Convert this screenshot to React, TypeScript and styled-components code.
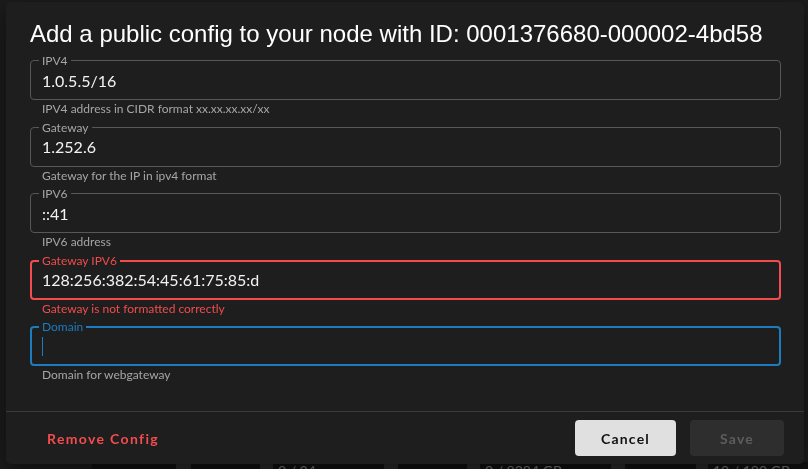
import React from 'react';
import styled, { createGlobalStyle } from 'styled-components';

const GlobalStyle = createGlobalStyle`
  html, body {
    margin: 0;
    padding: 0;
    background: #1c1c1c;
    overflow: hidden;
  }
  * {
    box-sizing: border-box;
  }
`;

type FieldState = 'normal' | 'error' | 'focused';

const COLORS = {
  dialog: '#1e1e1e',
  border: '#575757',
  label: '#a6a6a6',
  text: '#f2f2f2',
  red: '#f24c4e',
  blue: '#1c7cbf',
};

const stateColor = (s: FieldState) =>
  s === 'error' ? COLORS.red : s === 'focused' ? COLORS.blue : COLORS.border;

const stateText = (s: FieldState) =>
  s === 'error' ? COLORS.red : s === 'focused' ? COLORS.blue : COLORS.label;

const borderWidth = (s: FieldState) => (s === 'normal' ? 1 : 2);

// page behind the modal, only a sliver of the table shows at the bottom
const Page = styled.div`
  width: 808px;
  height: 469px;
  display: flex;
  align-items: flex-end;
  overflow: hidden;
`;

const TableRow = styled.div`
  display: flex;
  width: 100%;
  height: 24px;
  margin-bottom: -17px;
  padding-left: 92px;
`;

const Cell = styled.div<{ $w: number; $shade?: boolean }>`
  width: ${(p) => p.$w}px;
  flex: none;
  background: ${(p) => (p.$shade ? '#2b2b2b' : '#121212')};
  color: #7a7a7a;
  font-family: Lato, 'Noto Sans', sans-serif;
  font-size: 14px;
  line-height: 18px;
  padding-left: 5px;
  white-space: nowrap;
`;

const Backdrop = styled.div`
  position: fixed;
  inset: 0;
`;

const Dialog = styled.div`
  position: absolute;
  top: 2px;
  left: 6px;
  width: 798px;
  height: 462px;
  background: ${COLORS.dialog};
  border-radius: 5px;
  display: flex;
  flex-direction: column;
  box-shadow: 0 8px 24px rgba(0, 0, 0, 0.5);
`;

const Content = styled.div`
  flex: 1;
  padding: 16px 23px 0 24px;
`;

const Title = styled.h2`
  margin: 0 0 10px;
  font-family: 'Liberation Sans', Arial, sans-serif;
  font-weight: 400;
  font-size: 24px;
  line-height: 32px;
  color: #ffffff;
  white-space: nowrap;
`;

const Form = styled.div`
  display: flex;
  flex-direction: column;
  gap: 9.5px;
`;

const FieldWrap = styled.div`
  display: flex;
  flex-direction: column;
`;

const Outline = styled.div<{ $state: FieldState }>`
  position: relative;
  height: 40px;
  border: ${(p) => borderWidth(p.$state)}px solid ${(p) => stateColor(p.$state)};
  border-radius: 4px;
  display: flex;
  align-items: center;
  padding-left: ${(p) => 12 - borderWidth(p.$state)}px;
`;

const Label = styled.span<{ $state: FieldState }>`
  position: absolute;
  top: ${(p) => -6 - borderWidth(p.$state)}px;
  left: ${(p) => 9 - borderWidth(p.$state)}px;
  padding: 0 3px;
  background: ${COLORS.dialog};
  color: ${(p) => stateText(p.$state)};
  font-family: Lato, 'Noto Sans', sans-serif;
  font-size: 12px;
  line-height: 14px;
`;

const Value = styled.span`
  font-family: Lato, 'Noto Sans', sans-serif;
  font-size: 16px;
  color: ${COLORS.text};
`;

const Caret = styled.span`
  display: block;
  width: 1px;
  height: 19px;
  background: ${COLORS.blue};
`;

const Helper = styled.div<{ $error?: boolean }>`
  margin-top: 1px;
  padding-left: 12px;
  font-family: Lato, 'Noto Sans', sans-serif;
  font-size: 12px;
  line-height: 16px;
  color: ${(p) => (p.$error ? COLORS.red : COLORS.label)};
`;

const Footer = styled.div`
  border-top: 1px solid #3b3b3b;
  height: 53px;
  display: flex;
  align-items: center;
  padding: 0 20px 0 25px;
`;

const TextButton = styled.button`
  background: none;
  border: none;
  padding: 8px 16px;
  font-family: Lato, 'Noto Sans', sans-serif;
  font-weight: 700;
  font-size: 14px;
  letter-spacing: 1.35px;
  color: ${COLORS.red};
  cursor: pointer;
`;

const Spacer = styled.div`
  flex: 1;
`;

const Button = styled.button<{ $variant: 'light' | 'disabled'; $w: number }>`
  width: ${(p) => p.$w}px;
  height: 36px;
  border: none;
  border-radius: 4px;
  font-family: Lato, 'Noto Sans', sans-serif;
  font-weight: 700;
  font-size: 14px;
  letter-spacing: 1.2px;
  background: ${(p) => (p.$variant === 'light' ? '#e0e0e0' : '#2e2e2e')};
  color: ${(p) => (p.$variant === 'light' ? '#111111' : '#5d5d5d')};
  & + & {
    margin-left: 14px;
  }
`;

interface FieldProps {
  label: string;
  value?: string;
  helper: string;
  state?: FieldState;
}

const Field = ({ label, value, helper, state = 'normal' }: FieldProps) => (
  <FieldWrap>
    <Outline $state={state}>
      <Label $state={state}>{label}</Label>
      {state === 'focused' ? <Caret /> : <Value>{value}</Value>}
    </Outline>
    <Helper $error={state === 'error'}>{helper}</Helper>
  </FieldWrap>
);

const bgCells: { w: number; shade?: boolean; text?: string }[] = [
  { w: 84 },
  { w: 15, shade: true },
  { w: 69 },
  { w: 13, shade: true },
  { w: 111, text: '0 / 24' },
  { w: 14, shade: true },
  { w: 69 },
  { w: 13, shade: true },
  { w: 131, text: '0 / 8384 GB' },
  { w: 14, shade: true },
  { w: 71 },
  { w: 12, shade: true },
  { w: 100, text: '19 / 189 GB' },
];

export default function App() {
  return (
    <>
      <GlobalStyle />
      <Page>
        <TableRow>
          {bgCells.map((c, i) => (
            <Cell key={i} $w={c.w} $shade={c.shade}>
              {c.text}
            </Cell>
          ))}
        </TableRow>
      </Page>
      <Backdrop>
        <Dialog>
          <Content>
            <Title>Add a public config to your node with ID: 0001376680-000002-4bd58</Title>
            <Form>
              <Field label="IPV4" value="1.0.5.5/16" helper="IPV4 address in CIDR format xx.xx.xx.xx/xx" />
              <Field label="Gateway" value="1.252.6" helper="Gateway for the IP in ipv4 format" />
              <Field label="IPV6" value="::41" helper="IPV6 address" />
              <Field
                label="Gateway IPV6"
                value="128:256:382:54:45:61:75:85:d"
                helper="Gateway is not formatted correctly"
                state="error"
              />
              <Field label="Domain" helper="Domain for webgateway" state="focused" />
            </Form>
          </Content>
          <Footer>
            <TextButton>Remove Config</TextButton>
            <Spacer />
            <Button $variant="light" $w={101}>
              Cancel
            </Button>
            <Button $variant="disabled" $w={94} disabled>
              Save
            </Button>
          </Footer>
        </Dialog>
      </Backdrop>
    </>
  );
}
